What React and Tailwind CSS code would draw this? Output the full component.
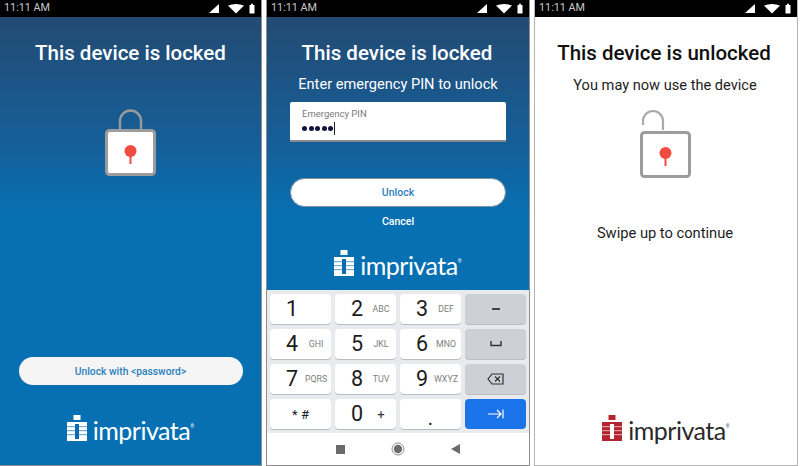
const roboto = "font-['Roboto',sans-serif]";

function StatusBar() {
  return (
    <div className="flex h-[17px] shrink-0 items-center justify-between bg-black pl-[4px] pr-[7px]">
      <span className="text-[10.8px] leading-none text-[#c9c9c9]">11:11 AM</span>
      <svg width="46" height="11" viewBox="0 0 46 11" className="mr-[-1px]">
        <path d="M0 10 L10 1 V10 Z" fill="#fff" />
        <path d="M19 2.5 Q27 -0.5 35 2.5 L27 10.5 Z" fill="#fff" />
        <path d="M40.5 2 H42 V0.8 H44 V2 H45.5 V10.5 H40.5 Z" fill="#fff" />
      </svg>
    </div>
  );
}

function Lock({ open }) {
  return (
    <svg width="60" height="72" viewBox="0 0 60 72" className="block">
      {open ? (
        <path d="M7 16 V12 A10 10 0 0 1 27 12 V21" fill="none" stroke="#a9a9a9" strokeWidth="2.2" />
      ) : (
        <path d="M19 26 V14 A10.5 10.5 0 0 1 40 14 V26" fill="none" stroke="#9a9a9a" strokeWidth="2.4" />
      )}
      <rect x="5.5" y="23.5" width="48" height="44" rx="3" fill="#fff" stroke="#9c9c9c" strokeWidth="3" />
      <circle cx="29.5" cy="44" r="6" fill="#f04b40" />
      <rect x="28.5" y="47" width="2" height="10" fill="#f04b40" />
    </svg>
  );
}

function Logo({ dark }) {
  const c = dark ? "#b3252e" : "#ffffff";
  const hole = dark ? "#ffffff" : "#0a6cae";
  return (
    <div className="flex items-start justify-center">
      <svg width="20" height="26" viewBox="0 0 20 26" className="mr-[6px] block shrink-0">
        <rect x="6.5" y="0" width="7" height="5" fill={c} />
        <rect x="0" y="7" width="20" height="19" fill={c} />
        {[11, 15, 19].map((y) => (
          <rect key={y} x="0" y={y} width="20" height="1.2" fill={hole} opacity="0.55" />
        ))}
        <rect x="8" y="9" width="4" height="15" fill={hole} />
      </svg>
      <span
        className={`font-['Lato',sans-serif] text-[25px] font-normal leading-[30px] tracking-[-0.5px] ${dark ? "text-[#2b2b2b]" : "text-white"}`}
      >
        imprivata
      </span>
      <span className={`mt-[9px] text-[5px] leading-none ${dark ? "text-[#555]" : "text-white"}`}>®</span>
    </div>
  );
}

function Key({ n, sub }) {
  return (
    <div className="flex h-[30px] items-center rounded-[4px] bg-white shadow-[0_1px_0_#b9bcc2]">
      <span className="ml-[10px] w-[24px] shrink-0 text-center text-[21.5px] leading-none text-[#1c1c1c]">{n}</span>
      <span className="w-[24px] shrink-0 whitespace-nowrap text-center text-[8.8px] leading-none text-[#808080]">{sub}</span>
    </div>
  );
}

function CenterKey({ children, gray }) {
  return (
    <div className={`flex h-[30px] items-center justify-center rounded-[4px] shadow-[0_1px_0_#b9bcc2] ${gray ? "bg-[#cdd0d6]" : "bg-white"}`}>
      {children}
    </div>
  );
}

function Keypad() {
  const row1 = [["1", ""], ["2", "ABC"], ["3", "DEF"]];
  const row2 = [["4", "GHI"], ["5", "JKL"], ["6", "MNO"]];
  const row3 = [["7", "PQRS"], ["8", "TUV"], ["9", "WXYZ"]];
  return (
    <div className="grid grid-cols-4 gap-x-[4px] gap-y-[5px] bg-[#e8eaed] px-[3px] py-[4px]">
      {row1.map(([n, s]) => <Key key={n} n={n} sub={s} />)}
      <CenterKey gray><span className="block h-[1.5px] w-[8px] bg-[#444]" /></CenterKey>
      {row2.map(([n, s]) => <Key key={n} n={n} sub={s} />)}
      <CenterKey gray>
        <svg width="12" height="6" viewBox="0 0 12 6" className="block">
          <path d="M1 0 V4.5 H11 V0" fill="none" stroke="#333" strokeWidth="1.4" />
        </svg>
      </CenterKey>
      {row3.map(([n, s]) => <Key key={n} n={n} sub={s} />)}
      <CenterKey gray>
        <svg width="17" height="12" viewBox="0 0 17 12" className="block">
          <path d="M5 1 H16 V11 H5 L1 6 Z" fill="none" stroke="#333" strokeWidth="1.2" />
          <path d="M8 3.5 L13 8.5 M13 3.5 L8 8.5" stroke="#333" strokeWidth="1.2" />
        </svg>
      </CenterKey>
      <CenterKey><span className="text-[13px] leading-none text-[#1c1c1c]">* #</span></CenterKey>
      <Key n="0" sub={<span className="text-[13px] text-[#333]">+</span>} />
      <CenterKey><span className="mt-[8px] text-[20px] leading-none text-[#1c1c1c]">.</span></CenterKey>
      <div className="flex h-[30px] items-center justify-center rounded-[4px] bg-[#1a73e8]">
        <svg width="16" height="10" viewBox="0 0 16 10" className="block">
          <path d="M0 5 H13 M9 1 L13 5 L9 9 M15 0.5 V9.5" fill="none" stroke="#fff" strokeWidth="1.2" />
        </svg>
      </div>
    </div>
  );
}

function NavBar() {
  return (
    <div className="flex h-[32px] items-center justify-center gap-[46px] bg-white">
      <span className="block h-[9px] w-[9px] bg-[#6b6b6b]" />
      <svg width="14" height="14" viewBox="0 0 14 14" className="block">
        <circle cx="7" cy="7" r="6" fill="none" stroke="#8c8c8c" strokeWidth="1" />
        <circle cx="7" cy="7" r="4.2" fill="#6b6b6b" />
      </svg>
      <svg width="9" height="10" viewBox="0 0 9 10" className="block">
        <path d="M0 5 L9 0 V10 Z" fill="#6b6b6b" />
      </svg>
    </div>
  );
}

const blue = "bg-[linear-gradient(to_bottom,#234a72_0px,#15609a_130px,#0670b3_200px)]";

export default function App() {
  return (
    <div className={`flex h-[466px] w-[800px] overflow-hidden bg-white ${roboto}`}>
      <div className="flex h-[466px] w-[262px] shrink-0 flex-col border-r border-b border-[#8f8f8f]">
        <StatusBar />
        <div className={`flex flex-1 flex-col items-center ${blue}`}>
          <h1 className="mt-[23px] text-[20.5px] font-medium leading-[26px] text-white">This device is locked</h1>
          <div className="mt-[41px]"><Lock /></div>
          <button className="mt-[178px] h-[28px] w-[224px] rounded-full bg-[#f5f5f5] pt-[1px] text-[10.3px] font-medium text-[#2c7fbd]">
            Unlock with &lt;password&gt;
          </button>
          <div className="mt-[30px]"><Logo /></div>
        </div>
      </div>

      <div className="ml-[4px] flex h-[466px] w-[264px] shrink-0 flex-col border-x border-b border-[#8f8f8f]">
        <StatusBar />
        <div className={`flex flex-1 flex-col items-center ${blue}`}>
          <h1 className="mr-[2px] mt-[23px] text-[20.5px] font-medium leading-[26px] text-white">This device is locked</h1>
          <p className="mt-[8px] text-[14.6px] leading-[20px] text-white">Enter emergency PIN to unlock</p>
          <div className="mt-[8px] h-[40px] w-[216px] rounded-t-[2px] border-b-2 border-[#8a8a8a] bg-white pl-[12px] pt-[6px]">
            <div className="text-[9.5px] leading-[11px] text-[#7b7b7b]">Emergency PIN</div>
            <div className="mt-[3px] flex items-center">
              <span className="flex gap-[1.5px]">
                {[0, 1, 2, 3, 4].map((i) => (
                  <span key={i} className="block h-[5px] w-[5px] rounded-full bg-[#10123f]" />
                ))}
              </span>
              <span className="ml-[1px] block h-[13px] w-[1px] bg-[#222]" />
            </div>
          </div>
          <button className="mt-[36px] h-[29px] w-[216px] rounded-full border border-[#7f8f9f] bg-white text-[10.5px] font-medium text-[#2c7fbd]">
            Unlock
          </button>
          <div className="mt-[8px] text-[10.5px] font-medium leading-[13px] text-white">Cancel</div>
          <div className="mt-[22px]"><Logo /></div>
          <div className="mt-[10px] w-full">
            <Keypad />
            <NavBar />
          </div>
        </div>
      </div>

      <div className="ml-[4px] flex h-[466px] w-[264px] shrink-0 flex-col border-x border-b border-[#b5b5b5]">
        <StatusBar />
        <div className="flex flex-1 flex-col items-center bg-white pr-[2px]">
          <h1 className="mr-[2px] mt-[23px] text-[20.5px] font-medium leading-[26px] text-[#111]">This device is unlocked</h1>
          <p className="mt-[9px] text-[14.6px] leading-[20px] text-[#1d1d1d]">You may now use the device</p>
          <div className="ml-[2px] mt-[14px]"><Lock open /></div>
          <p className="mt-[42px] text-[14.7px] leading-[20px] text-[#1d1d1d]">Swipe up to continue</p>
          <div className="ml-[2px] mt-[172px]"><Logo dark /></div>
        </div>
      </div>
    </div>
  );
}
